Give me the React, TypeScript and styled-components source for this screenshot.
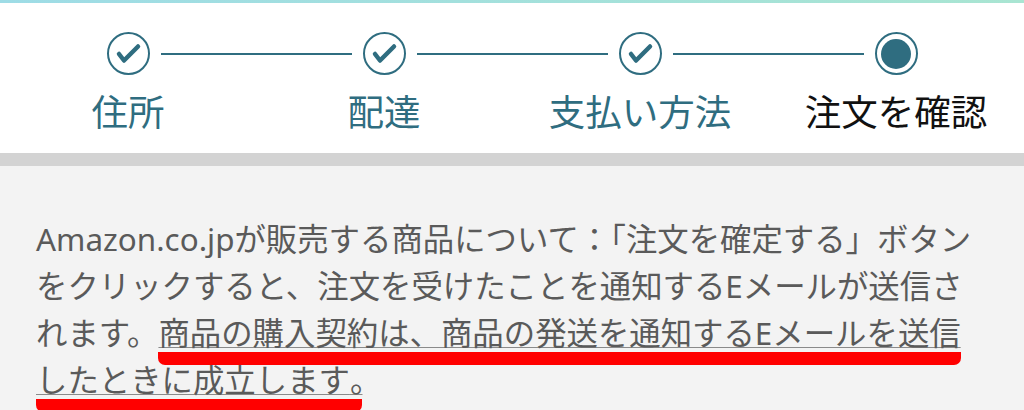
import styled, { createGlobalStyle } from 'styled-components';

const GlobalStyle = createGlobalStyle`
  html, body {
    margin: 0;
    padding: 0;
    background: #f3f3f3;
  }
  body {
    font-family: "Noto Sans", "Noto Sans CJK JP", sans-serif;
  }
`;

const TEAL = '#2f6d80';

const Page = styled.div`
  width: 1024px;
  height: 410px;
  overflow: hidden;
  background: #f3f3f3;
`;

const TopStripe = styled.div`
  height: 3px;
  background: linear-gradient(90deg, #9edce6, #a9e5d2);
`;

const Header = styled.header`
  background: #ffffff;
  padding: 29px 0 21px;
`;

const Stepper = styled.ol`
  list-style: none;
  margin: 0;
  padding: 0;
  display: grid;
  grid-template-columns: repeat(4, 256px);
`;

const Step = styled.li`
  display: flex;
  flex-direction: column;
  align-items: center;
`;

const Track = styled.div`
  width: 100%;
  display: flex;
  align-items: center;
`;

const Connector = styled.span<{ $side: 'left' | 'right'; $hidden?: boolean }>`
  flex: 1;
  height: 2px;
  background: ${({ $hidden }) => ($hidden ? 'transparent' : TEAL)};
  margin-left: ${({ $side }) => ($side === 'right' ? '11px' : '0')};
  margin-right: ${({ $side }) => ($side === 'left' ? '11px' : '0')};
`;

const Circle = styled.span`
  flex: none;
  width: 43px;
  height: 43px;
  box-sizing: border-box;
  border: 2px solid ${TEAL};
  border-radius: 50%;
  display: flex;
  align-items: center;
  justify-content: center;
  background: #ffffff;
`;

const Dot = styled.span`
  width: 30px;
  height: 30px;
  border-radius: 50%;
  background: ${TEAL};
`;

const Label = styled.span<{ $current?: boolean }>`
  margin-top: 14px;
  font-family: "Noto Sans CJK JP", sans-serif;
  font-size: 36.5px;
  line-height: 43px;
  color: ${({ $current }) => ($current ? '#111111' : TEAL)};
  white-space: nowrap;
`;

const Divider = styled.div`
  height: 13px;
  background: #d3d3d3;
`;

const Notice = styled.section`
  padding: 49px 40px 0 36px;
`;

const Text = styled.p`
  margin: 0;
  font-size: 31.4px;
  line-height: 47px;
  color: #5a5a5a;
`;

const Marker = styled.span`
  background: linear-gradient(#ff0000, #ff0000) left bottom / 100% 13px no-repeat;
  padding-bottom: 11px;
  border-radius: 7px;
  -webkit-box-decoration-break: clone;
  box-decoration-break: clone;
`;

const Link = styled.span`
  text-decoration: underline;
  text-decoration-color: #8a8a8a;
  text-decoration-thickness: 1px;
  text-underline-offset: 2px;
`;

/* half-width closing punctuation at the end of the sentence */
const Stop = styled.span`
  letter-spacing: -0.6em;
`;

const Check = () => (
  <svg width="43" height="43" viewBox="-21.5 -21.5 43 43" style={{ margin: -2 }}>
    <path
      d="M -9.5 0.5 L -4.5 7 L 9.5 -7"
      fill="none"
      stroke={TEAL}
      strokeWidth="4.5"
      strokeLinecap="round"
      strokeLinejoin="round"
    />
  </svg>
);

const steps = ['住所', '配達', '支払い方法', '注文を確認'];

export default function App() {
  return (
    <Page>
      <GlobalStyle />
      <TopStripe />
      <Header>
        <Stepper>
          {steps.map((label, i) => {
            const current = i === steps.length - 1;
            return (
              <Step key={label}>
                <Track>
                  <Connector $side="left" $hidden={i === 0} />
                  <Circle>{current ? <Dot /> : <Check />}</Circle>
                  <Connector $side="right" $hidden={current} />
                </Track>
                <Label $current={current}>{label}</Label>
              </Step>
            );
          })}
        </Stepper>
      </Header>
      <Divider />
      <Notice>
        <Text>
          Amazon.co.jpが販売する商品について：「注文を確定する」ボタンをクリックすると、注文を受けたことを通知するEメールが送信されます。
          <Marker>
            <Link>
              商品の購入契約は、商品の発送を通知するEメールを送信したときに成立します<Stop>。</Stop>
            </Link>
          </Marker>
        </Text>
      </Notice>
    </Page>
  );
}
